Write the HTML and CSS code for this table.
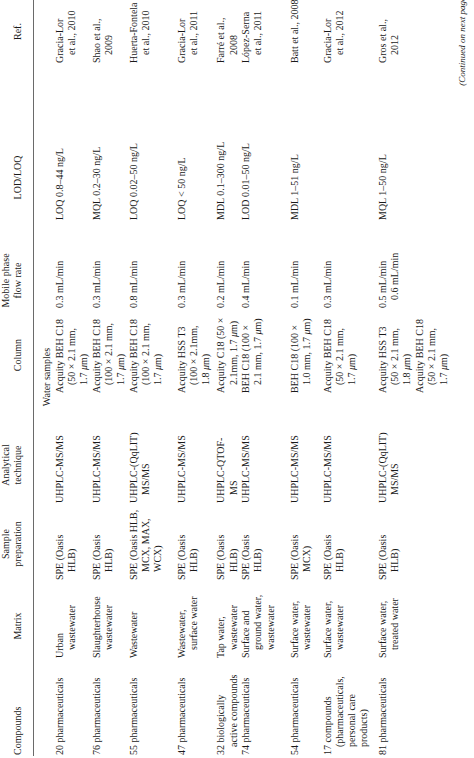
FILE: index.html
```html
<!DOCTYPE html>
<html lang="en">
<head>
<meta charset="utf-8">
<title>Table</title>
<link rel="stylesheet" href="styles.css">
</head>
<body>
<div class="page">
  <div class="sheet">
    <table class="tbl">
      <colgroup>
        <col class="w1"><col class="w2"><col class="w3"><col class="w4"><col class="w5"><col class="w6"><col class="w7"><col class="w8">
      </colgroup>
      <thead>
        <tr>
          <th class="first">Compounds</th>
          <th>Matrix</th>
          <th>Sample<br>preparation</th>
          <th>Analytical<br>technique</th>
          <th>Column</th>
          <th>Mobile phase<br>flow rate</th>
          <th>LOD/LOQ</th>
          <th>Ref.</th>
        </tr>
      </thead>
      <tbody>
        <tr class="group"><td colspan="8">Water samples</td></tr>
        <tr>
          <td>20 pharmaceuticals</td>
          <td>Urban<br>wastewater</td>
          <td>SPE (Oasis<br>HLB)</td>
          <td>UHPLC-MS/MS</td>
          <td>Acquity BEH C18<br>(50 × 2.1 mm,<br>1.7 <i>μ</i>m)</td>
          <td>0.3 mL/min</td>
          <td>LOQ 0.8–44 ng/L</td>
          <td>Gracia-Lor<br>et al., 2010</td>
        </tr>
        <tr>
          <td>76 pharmaceuticals</td>
          <td>Slaughterhouse<br>wastewater</td>
          <td>SPE (Oasis<br>HLB)</td>
          <td>UHPLC-MS/MS</td>
          <td>Acquity BEH C18<br>(100 × 2.1 mm,<br>1.7 <i>μ</i>m)</td>
          <td>0.3 mL/min</td>
          <td>MQL 0.2–30 ng/L</td>
          <td>Shao et al.,<br>2009</td>
        </tr>
        <tr class="r3">
          <td>55 pharmaceuticals</td>
          <td>Wastewater</td>
          <td>SPE (Oasis HLB,<br>MCX, MAX,<br>WCX)</td>
          <td>UHPLC-(QqLIT)<br>MS/MS</td>
          <td>Acquity BEH C18<br>(100 × 2.1 mm,<br>1.7 <i>μ</i>m)</td>
          <td>0.8 mL/min</td>
          <td>LOQ 0.02–50 ng/L</td>
          <td>Huerta-Fontela<br>et al., 2010</td>
        </tr>
        <tr class="r4">
          <td>47 pharmaceuticals</td>
          <td>Wastewater,<br>surface water</td>
          <td>SPE (Oasis<br>HLB)</td>
          <td>UHPLC-MS/MS</td>
          <td>Acquity HSS T3<br>(100 × 2.1mm,<br>1.8 <i>μ</i>m)</td>
          <td>0.3 mL/min</td>
          <td>LOQ &lt; 50 ng/L</td>
          <td>Gracia-Lor<br>et al., 2011</td>
        </tr>
        <tr>
          <td>32 biologically<br>active compounds</td>
          <td>Tap water,<br>wastewater</td>
          <td>SPE (Oasis<br>HLB)</td>
          <td>UHPLC-QTOF-<br>MS</td>
          <td>Acquity C18 (50 ×<br>2.1mm, 1.7 <i>μ</i>m)</td>
          <td>0.2 mL/min</td>
          <td>MDL 0.1–300 ng/L</td>
          <td>Farré et al.,<br>2008</td>
        </tr>
        <tr class="r6">
          <td>74 pharmaceuticals</td>
          <td>Surface and<br>ground water,<br>wastewater</td>
          <td>SPE (Oasis<br>HLB)</td>
          <td>UHPLC-MS/MS</td>
          <td>BEH C18 (100 ×<br>2.1 mm, 1.7 <i>μ</i>m)</td>
          <td>0.4 mL/min</td>
          <td>LOD 0.01–50 ng/L</td>
          <td>López-Serna<br>et al., 2011</td>
        </tr>
        <tr class="r7">
          <td>54 pharmaceuticals</td>
          <td>Surface water,<br>wastewater</td>
          <td>SPE (Oasis<br>MCX)</td>
          <td>UHPLC-MS/MS</td>
          <td>BEH C18 (100 ×<br>1.0 mm, 1.7 <i>μ</i>m)</td>
          <td>0.1 mL/min</td>
          <td>MDL 1–51 ng/L</td>
          <td>Batt et al., 2008</td>
        </tr>
        <tr class="r8">
          <td>17 compounds<br>(pharmaceuticals,<br>personal care<br>products)</td>
          <td>Surface water,<br>wastewater</td>
          <td>SPE (Oasis<br>HLB)</td>
          <td>UHPLC-MS/MS</td>
          <td>Acquity BEH C18<br>(50 × 2.1 mm,<br>1.7 <i>μ</i>m)</td>
          <td>0.3 mL/min</td>
          <td></td>
          <td>Gracia-Lor<br>et al., 2012</td>
        </tr>
        <tr>
          <td>81 pharmaceuticals</td>
          <td>Surface water,<br>treated water</td>
          <td>SPE (Oasis<br>HLB)</td>
          <td>UHPLC-(QqLIT)<br>MS/MS</td>
          <td><div>Acquity HSS T3<br>(50 × 2.1 mm,<br>1.8 <i>μ</i>m)</div><div>Acquity BEH C18<br>(50 × 2.1 mm,<br>1.7 <i>μ</i>m)</div></td>
          <td>0.5 mL/min<br>0.6 mL/min</td>
          <td>MQL 1–50 ng/L</td>
          <td>Gros et al.,<br>2012</td>
        </tr>
      </tbody>
    </table>
    <p class="cont">(Continued on next page)</p>
  </div>
</div>
</body>
</html>
```

FILE: styles.css
```css
html, body {
  margin: 0;
  padding: 0;
  background: #ffffff;
}

.page {
  width: 474px;
  height: 758px;
  overflow: hidden;
}

.sheet {
  width: 758px;
  height: 474px;
  transform-origin: 0 0;
  transform: rotate(-90deg) translateX(-100%);
  font-family: "Liberation Serif", "Times New Roman", serif;
  font-size: 10px;
  line-height: 12.3px;
  color: #1a1a1a;
}

.tbl {
  width: 758px;
  table-layout: fixed;
  border-collapse: collapse;
  margin-top: -2px;
}

.w1 { width: 98px; }
.w2 { width: 78px; }
.w3 { width: 77px; }
.w4 { width: 110px; }
.w5 { width: 85px; }
.w6 { width: 88px; }
.w7 { width: 157px; }
.w8 { width: 65px; }

.tbl th {
  font-weight: normal;
  text-align: center;
  vertical-align: bottom;
  white-space: nowrap;
  padding: 0 0 8px 0;
  border-bottom: 1px solid #6a6a6a;
}

.tbl th.first {
  text-align: left;
  padding-left: 1px;
}

.tbl td {
  vertical-align: top;
  white-space: nowrap;
  text-align: left;
  padding: 0 0 0 8px;
  text-indent: -8px;
}

.tbl td:first-child {
  padding-left: 9px;
}

.tbl th:nth-child(1), .tbl td:nth-child(1) { padding-right: 17px; }
.tbl th:nth-child(2), .tbl td:nth-child(2) { padding-right: 14px; }
.tbl th:nth-child(3), .tbl td:nth-child(3) { padding-right: 5px; }
.tbl th:nth-child(4), .tbl td:nth-child(4) { padding-right: 34px; }
.tbl th:nth-child(5), .tbl td:nth-child(5) { padding-right: 9px; }
.tbl th:nth-child(6), .tbl td:nth-child(6) { padding-right: 33px; }
.tbl th:nth-child(7), .tbl td:nth-child(7) { padding-right: 72px; }
.tbl th:nth-child(8), .tbl td:nth-child(8) { padding-right: 2px; }

.tbl tr.group td {
  text-align: center;
  text-indent: 0;
  padding: 7px 0 1px 0;
}

.tbl tr.r3 td { padding-bottom: 11px; }
.tbl tr.r4 td { padding-bottom: 3px; }
.tbl tr.r6 td { padding-bottom: 12px; }
.tbl tr.r7 td { padding-bottom: 8px; }
.tbl tr.r8 td { padding-bottom: 6px; }

.cont {
  margin: 0 -4px 0 0;
  padding-top: 5px;
  text-align: right;
  font-style: italic;
  font-size: 9px;
}
```
